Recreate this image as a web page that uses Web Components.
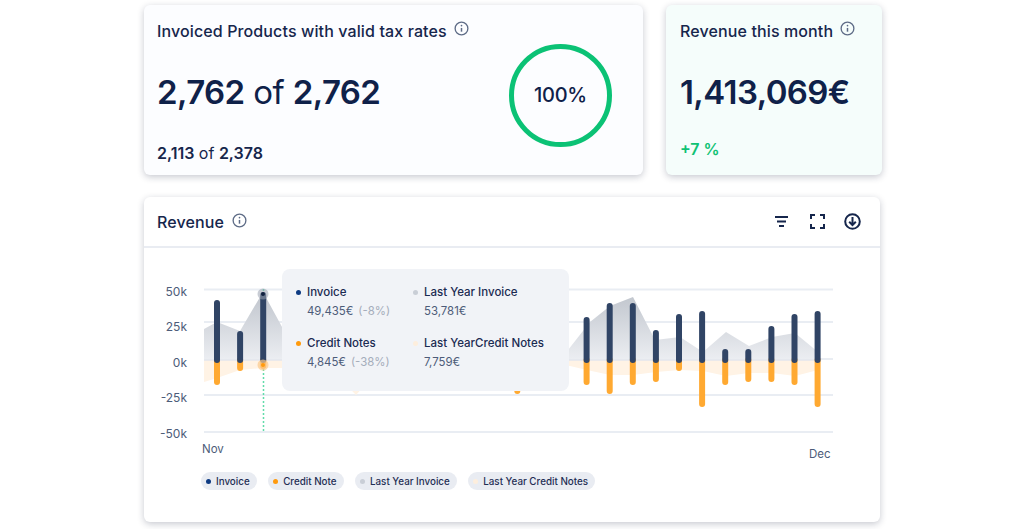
<!DOCTYPE html>
<html>
<head>
<meta charset="utf-8">
<title>Revenue dashboard</title>
<style>
    html, body { margin: 0; background: #fff; }
    body { font-family: 'Inter', 'Liberation Sans', sans-serif; color: #0f2149; }
</style>
</head>
<body>
<dash-board>
    <stat-card slot="top" heading="Invoiced Products with valid tax rates" style="width: 499px">
        <div slot="main" style="display: flex; justify-content: space-between">
            <div>
                <big-count><b>2,762</b> of <b>2,762</b></big-count>
                <small-count style="margin-top: 26px"><b>2,113</b> of <b>2,378</b></small-count>
            </div>
            <progress-ring value="100%"></progress-ring>
        </div>
    </stat-card>
    <stat-card slot="top" heading="Revenue this month" tint="#f5fdfb" style="width: 216px; padding-left: 14px">
        <div slot="main">
            <big-count><b>1,413,069€</b></big-count>
            <small-count style="margin-top: 22px; color: #0fc274"><span style="font-weight: 600">+7 %</span></small-count>
        </div>
    </stat-card>
    <revenue-card slot="bottom"></revenue-card>
</dash-board>

<script>
const INFO_ICON = `<svg width="15" height="15" viewBox="0 0 16 16" fill="none" stroke="#5d6b86" stroke-width="1.4">
    <circle cx="8" cy="8" r="6.8"/><path d="M8 7.4v4" stroke-width="1.6"/><circle cx="8" cy="4.9" r=".9" fill="#5d6b86" stroke="none"/></svg>`;

class DashBoard extends HTMLElement {
    constructor() {
        super();
        this.attachShadow({mode: 'open'});
        this.shadowRoot.innerHTML = `
            <style>
                :host { display: block; width: 738px; padding: 5px 0 7px 144px; }
                .top { display: flex; gap: 23px; margin-bottom: 22px; }
            </style>
            <div class="top"><slot name="top"></slot></div>
            <slot name="bottom"></slot>`;
    }
}

class StatCard extends HTMLElement {
    constructor() {
        super();
        this.attachShadow({mode: 'open'});
        this.shadowRoot.innerHTML = `
            <style>
                :host {
                    display: block;
                    box-sizing: border-box;
                    height: 170px;
                    padding: 15px 13px 0 13px;
                    border-radius: 6px;
                    background: ${this.getAttribute('tint') || '#fcfdff'};
                    box-shadow: 0 2px 7px rgba(20, 30, 60, .24);
                }
                h2 {
                    display: flex;
                    gap: 7px;
                    margin: 0 0 27px;
                    font-size: 16px;
                    line-height: 22px;
                    font-weight: 500;
                    letter-spacing: .12px;
                    color: #16264c;
                    white-space: nowrap;
                }
                h2 svg { margin-top: 1px; }
            </style>
            <h2><span>${this.getAttribute('heading')}</span>${INFO_ICON}</h2>
            <slot name="main"></slot>`;
    }
}

class BigCount extends HTMLElement {
    constructor() {
        super();
        this.attachShadow({mode: 'open'});
        this.shadowRoot.innerHTML = `
            <style>
                :host { display: block; font-size: 33px; line-height: 46px; font-weight: 400; letter-spacing: -.6px; white-space: nowrap; }
                ::slotted(b) { font-weight: 600; }
            </style>
            <slot></slot>`;
    }
}

class SmallCount extends HTMLElement {
    constructor() {
        super();
        this.attachShadow({mode: 'open'});
        this.shadowRoot.innerHTML = `
            <style>
                :host { display: block; font-size: 16px; line-height: 24px; color: #16264c; white-space: nowrap; }
                ::slotted(b) { font-weight: 600; }
            </style>
            <slot></slot>`;
    }
}

class ProgressRing extends HTMLElement {
    constructor() {
        super();
        this.attachShadow({mode: 'open'});
        this.shadowRoot.innerHTML = `
            <style>
                :host {
                    display: flex;
                    align-items: center;
                    justify-content: center;
                    box-sizing: border-box;
                    width: 103px;
                    height: 103px;
                    margin: -25px 18px 0 0;
                    padding-bottom: 2px;
                    border: 5.5px solid #0bc275;
                    border-radius: 50%;
                    font-size: 20px;
                    font-weight: 500;
                    letter-spacing: -.3px;
                }
            </style>
            ${this.getAttribute('value')}`;
    }
}

class ChartTooltip extends HTMLElement {
    constructor() {
        super();
        this.attachShadow({mode: 'open'});
        const entry = (color, label, value, delta) => `
            <div class="entry">
                <i style="background: ${color}"></i>
                <strong>${label}</strong>
                <span>${value}${delta ? `<em>${delta}</em>` : ''}</span>
            </div>`;
        this.shadowRoot.innerHTML = `
            <style>
                :host {
                    position: absolute;
                    left: 138px;
                    top: 21px;
                    width: 287px;
                    height: 122px;
                    box-sizing: border-box;
                    padding: 14px 0 0 14px;
                    display: grid;
                    grid-template-columns: 117px 1fr;
                    grid-auto-rows: 51px;
                    border-radius: 8px;
                    background: #f1f3f7;
                    line-height: 19px;
                }
                .entry { display: grid; grid-template-columns: 11px 1fr; align-content: start; }
                i { width: 5px; height: 5px; margin-top: 7px; border-radius: 50%; }
                strong { font-size: 11.5px; font-weight: 500; color: #1b2b52; white-space: nowrap; }
                span { grid-column: 2; font-size: 11.4px; color: #4d5c79; white-space: nowrap; }
                em { font-style: normal; color: #a5adbb; margin-left: 5px; }
            </style>
            ${entry('#0d3a82', 'Invoice', '49,435€', '(-8%)')}
            ${entry('#c9ced6', 'Last Year Invoice', '53,781€')}
            ${entry('#ff9a0d', 'Credit Notes', '4,845€', '(-38%)')}
            ${entry('#fdeedd', 'Last YearCredit Notes', '7,759€')}`;
    }
}

class LegendChip extends HTMLElement {
    constructor() {
        super();
        this.attachShadow({mode: 'open'});
        this.shadowRoot.innerHTML = `
            <style>
                :host {
                    display: flex;
                    align-items: center;
                    gap: 5px;
                    height: 18px;
                    padding: 0 7.5px 0 5px;
                    border-radius: 9px;
                    background: #e9ecf2;
                    font-size: 9.8px;
                    font-weight: 500;
                    color: #1f2e54;
                    white-space: nowrap;
                }
                i { width: 5px; height: 5px; border-radius: 50%; background: ${this.getAttribute('color')}; }
            </style>
            <i></i><slot></slot>`;
    }
}

class RevenueChart extends HTMLElement {
    constructor() {
        super();
        this.attachShadow({mode: 'open'});
        // [top, bottom] of every bar, in page pixels. Empty days are skipped.
        const bars = {0: [300, 385], 1: [331, 371], 2: [292, 369], 13: [360, 394], 16: [317, 385], 17: [303, 394],
            18: [303, 385], 19: [330, 382], 20: [314, 371], 21: [311, 407], 22: [349, 385], 23: [349, 382],
            24: [326, 382], 25: [314, 385], 26: [311, 407]};
        const zero = 360;
        const barX = i => 217 + i * 23.1;
        let barMarkup = '';
        for (const i in bars) {
            const x = barX(+i), [top, bottom] = bars[i];
            barMarkup += `<path d="M${x} ${bottom - 3}V${zero}" class="down"/>`;
            if (top < zero) barMarkup += `<path d="M${x} ${top + 3}V${zero}" class="up"/>`;
        }
        const grid = [289.5, 322, 359, 395, 432].map(y => `<path d="M204 ${y}H833" class="grid"/>`).join('');
        const ticks = [['50k', 291], ['25k', 326], ['0k', 362], ['-25k', 397], ['-50k', 433]]
            .map(([t, y]) => `<text x="187" y="${y + 4.5}" text-anchor="end">${t}</text>`).join('');
        this.shadowRoot.innerHTML = `
            <style>
                :host { display: block; position: relative; height: 217px; }
                svg { display: block; }
                text { font-size: 12px; fill: #4d5c79; font-family: 'Inter', 'Liberation Sans', sans-serif; }
                .month { font-size: 11.5px; }
                .grid { stroke: #e9edf3; stroke-width: 2; }
                .up, .down { stroke-width: 6; stroke-linecap: round; fill: none; }
                .up { stroke: #304465; }
                .down { stroke: #ffa931; }
            </style>
            <svg width="736" height="217" viewBox="144 248 736 217">
                <defs>
                    <linearGradient id="last-year" x1="0" y1="0" x2="0" y2="1">
                        <stop offset="0" stop-color="#bfc4cc"/>
                        <stop offset="1" stop-color="#eceef2"/>
                    </linearGradient>
                </defs>
                ${grid}
                <path fill="url(#last-year)" d="M204 329L217 322L240 331L263 292L300 360L560 360L568 350L590 322L610 306L633 297L655 340L680 337L703 352L726 332L749 346L772 337L795 333L818 352V360H204Z"/>
                <path fill="#fff3e5" d="M204 382L217 378L240 370L263 368L330 368L356 395L380 368L570 366L587 370L610 375L633 375L656 372L680 370L703 371L726 376L749 373L772 373L795 376L818 370V360H204Z"/>
                <path d="M204 360H818" stroke="#e3e6ec" stroke-width="1.5"/>
                <path d="M263.5 289V432" stroke="#62dcaa" stroke-width="1.5" stroke-dasharray="2 2"/>
                ${barMarkup}
                <circle cx="263" cy="294" r="5.5" fill="#9aa3b1" fill-opacity=".55"/>
                <circle cx="263" cy="294" r="2" fill="#10203f"/>
                <circle cx="263" cy="365" r="5.5" fill="#fbc98c" fill-opacity=".7"/>
                <circle cx="263" cy="365" r="2" fill="#ff9a0d"/>
                ${ticks}
                <text x="202" y="453" class="month">Nov</text>
                <text x="809" y="458" class="month">Dec</text>
            </svg>
            <chart-tooltip></chart-tooltip>`;
    }
}

class RevenueCard extends HTMLElement {
    constructor() {
        super();
        this.attachShadow({mode: 'open'});
        this.shadowRoot.innerHTML = `
            <style>
                :host {
                    display: block;
                    box-sizing: border-box;
                    width: 736px;
                    height: 325px;
                    border-radius: 6px;
                    background: #fff;
                    box-shadow: 0 2px 7px rgba(20, 30, 60, .24);
                }
                header {
                    display: flex;
                    align-items: center;
                    height: 51px;
                    padding: 0 17px 0 13px;
                    box-sizing: border-box;
                    border-bottom: 2px solid #e9ecf2;
                }
                h2 { margin: 0 8px 0 0; font-size: 16px; font-weight: 500; letter-spacing: .1px; color: #16264c; }
                .tools { display: flex; gap: 14.5px; margin-left: auto; }
                .legend { display: flex; gap: 11px; margin: 7px 0 0 57px; }
                .info { display: flex; margin-top: -3px; }
            </style>
            <header>
                <h2>Revenue</h2><span class="info">${INFO_ICON}</span>
                <div class="tools">
                    <svg width="21" height="21" viewBox="0 0 21 21" fill="none" stroke="#16264c" stroke-width="2">
                        <path d="M4 6h13M6 10.5h9M8 15h5"/>
                    </svg>
                    <svg width="21" height="21" viewBox="0 0 21 21" fill="none" stroke="#16264c" stroke-width="2">
                        <path d="M4 8V4h4M13 4h4v4M17 13v4h-4M8 17H4v-4"/>
                    </svg>
                    <svg width="21" height="21" viewBox="0 0 21 21" fill="none" stroke="#16264c" stroke-width="2">
                        <circle cx="10.5" cy="10.5" r="7.3"/><path d="M10.5 6v8M7.2 10.8l3.3 3.3 3.3-3.3"/>
                    </svg>
                </div>
            </header>
            <revenue-chart></revenue-chart>
            <div class="legend">
                <legend-chip color="#0d3a82">Invoice</legend-chip>
                <legend-chip color="#ff9a0d">Credit Note</legend-chip>
                <legend-chip color="#c9ced6">Last Year Invoice</legend-chip>
                <legend-chip color="#fdeedd">Last Year Credit Notes</legend-chip>
            </div>`;
    }
}

customElements.define('dash-board', DashBoard);
customElements.define('stat-card', StatCard);
customElements.define('big-count', BigCount);
customElements.define('small-count', SmallCount);
customElements.define('progress-ring', ProgressRing);
customElements.define('chart-tooltip', ChartTooltip);
customElements.define('legend-chip', LegendChip);
customElements.define('revenue-chart', RevenueChart);
customElements.define('revenue-card', RevenueCard);
</script>
</body>
</html>
